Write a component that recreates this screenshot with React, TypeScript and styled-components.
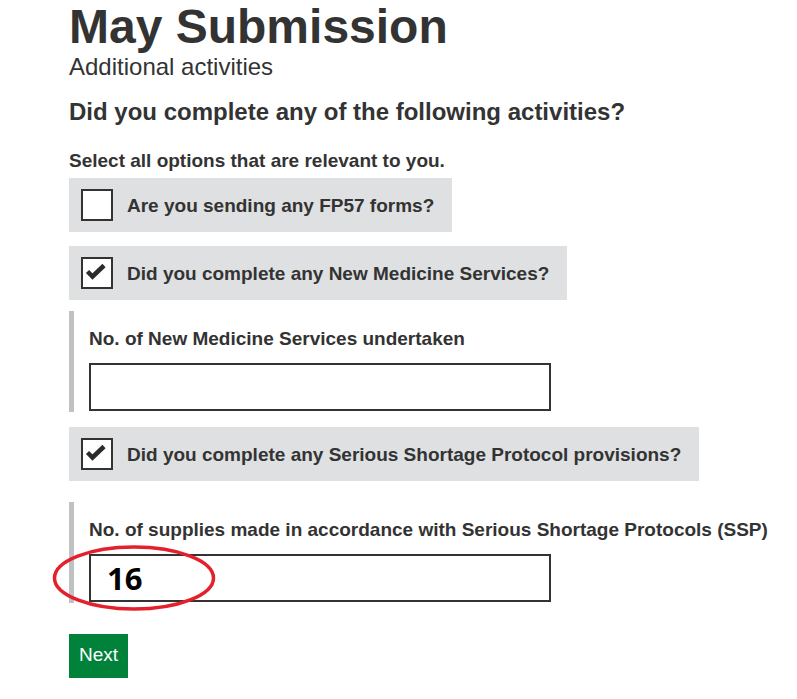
import styled, { createGlobalStyle } from 'styled-components';

const GlobalStyle = createGlobalStyle`
  html, body {
    margin: 0;
    padding: 0;
    background: #ffffff;
  }
  body {
    font-family: "Liberation Sans", Arial, sans-serif;
    color: #333333;
  }
`;

const Page = styled.main`
  padding: 3px 0 0 69px;
`;

const Title = styled.h1`
  margin: 0;
  font-size: 48px;
  line-height: 48px;
  font-weight: bold;
`;

const Caption = styled.p`
  margin: 4px 0 0;
  font-size: 24px;
  line-height: 24px;
`;

const Question = styled.h2`
  margin: 18px 0 0;
  font-size: 24px;
  line-height: 30px;
  font-weight: bold;
`;

const Hint = styled.p`
  margin: 21px 0 0;
  font-size: 19px;
  line-height: 25px;
  font-weight: bold;
`;

const Options = styled.div`
  display: flex;
  flex-direction: column;
  align-items: flex-start;
  margin-top: 5px;
`;

const OptionRow = styled.label<{ $top: number }>`
  display: inline-flex;
  align-items: center;
  gap: 14px;
  margin-top: ${({ $top }) => $top}px;
  padding: 11px 18px 11px 12px;
  background: #dee0e2;
  font-size: 19px;
  line-height: 25px;
  font-weight: bold;
`;

const Box = styled.span`
  box-sizing: border-box;
  display: flex;
  align-items: center;
  justify-content: center;
  width: 32px;
  height: 32px;
  border: 2px solid #333333;
  background: #ffffff;
`;

const Reveal = styled.div<{ $top: number }>`
  align-self: stretch;
  margin-top: ${({ $top }) => $top}px;
  padding: 15px 0 1px 15px;
  border-left: 5px solid #bfc1c3;
`;

const FieldLabel = styled.div`
  font-size: 19px;
  line-height: 25px;
  font-weight: bold;
`;

const FieldWrap = styled.div`
  position: relative;
  margin-top: 12px;
  width: 462px;
`;

const TextInput = styled.div`
  box-sizing: border-box;
  display: flex;
  align-items: center;
  height: 48px;
  padding-left: 16px;
  border: 2px solid #333333;
  background: #ffffff;
  font-family: "Open Sans", "Liberation Sans", sans-serif;
  font-size: 31px;
  font-weight: 700;
  color: #000000;
`;

const Ring = styled.svg`
  position: absolute;
  left: -38px;
  top: -9px;
  pointer-events: none;
`;

const NextButton = styled.button`
  margin-top: 31px;
  width: 59px;
  height: 44px;
  padding: 0 0 3px;
  border: none;
  background: #00823b;
  box-shadow: 0 2px 0 #003618;
  color: #ffffff;
  font-family: "Liberation Sans", Arial, sans-serif;
  font-size: 19px;
  cursor: pointer;
`;

function Tick() {
  return (
    <svg width="32" height="32" viewBox="0 0 32 32" style={{ position: 'relative', left: '-2px', top: '-2px', flexShrink: 0 }}>
      <path d="M8.5 16.5 L13.5 21.5 L25 10.5" fill="none" stroke="#2b2b2b" strokeWidth="4.5" strokeLinejoin="miter" />
    </svg>
  );
}

function Option({ text, checked, top }: { text: string; checked?: boolean; top: number }) {
  return (
    <OptionRow $top={top}>
      <Box>{checked && <Tick />}</Box>
      {text}
    </OptionRow>
  );
}

export default function App() {
  return (
    <>
      <GlobalStyle />
      <Page>
        <Title>May Submission</Title>
        <Caption>Additional activities</Caption>
        <Question>Did you complete any of the following activities?</Question>
        <Hint>Select all options that are relevant to you.</Hint>
        <Options>
          <Option top={0} text="Are you sending any FP57 forms?" />
          <Option top={14} checked text="Did you complete any New Medicine Services?" />
          <Reveal $top={11}>
            <FieldLabel>No. of New Medicine Services undertaken</FieldLabel>
            <FieldWrap>
              <TextInput />
            </FieldWrap>
          </Reveal>
          <Option top={15} checked text="Did you complete any Serious Shortage Protocol provisions?" />
          <Reveal $top={21}>
            <FieldLabel>No. of supplies made in accordance with Serious Shortage Protocols (SSP)</FieldLabel>
            <FieldWrap>
              <TextInput>16</TextInput>
              <Ring width="166" height="68" viewBox="0 0 166 68">
                <ellipse cx="83" cy="33" rx="79.5" ry="31" fill="none" stroke="#e3202b" strokeWidth="3.5" />
              </Ring>
            </FieldWrap>
          </Reveal>
          <NextButton>Next</NextButton>
        </Options>
      </Page>
    </>
  );
}
